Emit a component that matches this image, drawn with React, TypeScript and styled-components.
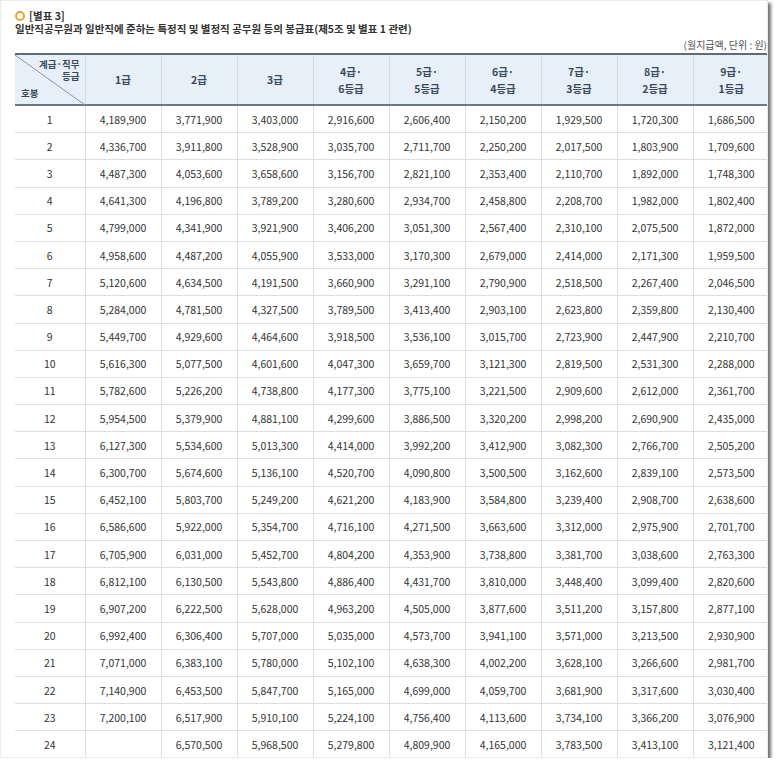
import React from 'react';
import styled, { createGlobalStyle } from 'styled-components';

const Global = createGlobalStyle`
  body { margin: 0; background: #fff; font-family: "Noto Sans CJK KR", "Noto Sans", sans-serif; }
`;

const Frame = styled.div`
  width: 768px;
  height: 758px;
  box-sizing: border-box;
  background: #fff;
  border: 1px solid #ececec;
  box-shadow: 3px 3px 3px rgba(0, 0, 0, 0.55);
  padding: 8px 0 0 14px;
  overflow: hidden;
`;

const Title = styled.div`
  font-size: 10.5px;
  font-weight: bold;
  color: #333;
  line-height: 13px;
  p { margin: 0; }
`;

const TitleRow = styled.div`
  display: flex;
  align-items: center;
  gap: 4px;
`;

const Dot = styled.span`
  width: 6px;
  height: 6px;
  border: 2px solid #f0a030;
  border-radius: 50%;
  display: inline-block;
`;

const Unit = styled.div`
  text-align: right;
  font-size: 10px;
  color: #555;
  margin: 2px 0 1px;
`;

const Table = styled.table`
  border-collapse: collapse;
  table-layout: fixed;
  width: 754px;
  font-size: 10.5px;
  color: #333;
  border-top: 2px solid #5d6b7a;
  th, td { text-align: center; padding: 0; }
  th {
    background: #e7eff9;
    height: 49px;
    line-height: 17px;
    font-weight: bold;
    color: #3b4a5a;
    border-right: 1px solid #d5dbe2;
    border-bottom: 2px solid #6c7a88;
  }
  td {
    height: 26.2px;
    border-right: 1px solid #dedede;
    border-bottom: 1px solid #dedede;
  }
  th:last-child, td:last-child { border-right: none; }
`;

const FirstCol = styled.col`
  width: 70px;
`;

const Corner = styled.th`
  position: relative;
`;

const Diagonal = styled.svg`
  position: absolute;
  left: 0;
  top: 0;
`;

const CornerLabel = styled.span<{ $top?: boolean }>`
  position: absolute;
  font-size: 9.5px;
  line-height: 12px;
  ${p => (p.$top ? 'right: 5px; top: 3px; text-align: right;' : 'left: 6px; bottom: 5px;')}
`;

const heads = ['1급', '2급', '3급', '4급·\n6등급', '5급·\n5등급', '6급·\n4등급', '7급·\n3등급', '8급·\n2등급', '9급·\n1등급'];

const raw = `4,189,900 3,771,900 3,403,000 2,916,600 2,606,400 2,150,200 1,929,500 1,720,300 1,686,500
4,336,700 3,911,800 3,528,900 3,035,700 2,711,700 2,250,200 2,017,500 1,803,900 1,709,600
4,487,300 4,053,600 3,658,600 3,156,700 2,821,100 2,353,400 2,110,700 1,892,000 1,748,300
4,641,300 4,196,800 3,789,200 3,280,600 2,934,700 2,458,800 2,208,700 1,982,000 1,802,400
4,799,000 4,341,900 3,921,900 3,406,200 3,051,300 2,567,400 2,310,100 2,075,500 1,872,000
4,958,600 4,487,200 4,055,900 3,533,000 3,170,300 2,679,000 2,414,000 2,171,300 1,959,500
5,120,600 4,634,500 4,191,500 3,660,900 3,291,100 2,790,900 2,518,500 2,267,400 2,046,500
5,284,000 4,781,500 4,327,500 3,789,500 3,413,400 2,903,100 2,623,800 2,359,800 2,130,400
5,449,700 4,929,600 4,464,600 3,918,500 3,536,100 3,015,700 2,723,900 2,447,900 2,210,700
5,616,300 5,077,500 4,601,600 4,047,300 3,659,700 3,121,300 2,819,500 2,531,300 2,288,000
5,782,600 5,226,200 4,738,800 4,177,300 3,775,100 3,221,500 2,909,600 2,612,000 2,361,700
5,954,500 5,379,900 4,881,100 4,299,600 3,886,500 3,320,200 2,998,200 2,690,900 2,435,000
6,127,300 5,534,600 5,013,300 4,414,000 3,992,200 3,412,900 3,082,300 2,766,700 2,505,200
6,300,700 5,674,600 5,136,100 4,520,700 4,090,800 3,500,500 3,162,600 2,839,100 2,573,500
6,452,100 5,803,700 5,249,200 4,621,200 4,183,900 3,584,800 3,239,400 2,908,700 2,638,600
6,586,600 5,922,000 5,354,700 4,716,100 4,271,500 3,663,600 3,312,000 2,975,900 2,701,700
6,705,900 6,031,000 5,452,700 4,804,200 4,353,900 3,738,800 3,381,700 3,038,600 2,763,300
6,812,100 6,130,500 5,543,800 4,886,400 4,431,700 3,810,000 3,448,400 3,099,400 2,820,600
6,907,200 6,222,500 5,628,000 4,963,200 4,505,000 3,877,600 3,511,200 3,157,800 2,877,100
6,992,400 6,306,400 5,707,000 5,035,000 4,573,700 3,941,100 3,571,000 3,213,500 2,930,900
7,071,000 6,383,100 5,780,000 5,102,100 4,638,300 4,002,200 3,628,100 3,266,600 2,981,700
7,140,900 6,453,500 5,847,700 5,165,000 4,699,000 4,059,700 3,681,900 3,317,600 3,030,400
7,200,100 6,517,900 5,910,100 5,224,100 4,756,400 4,113,600 3,734,100 3,366,200 3,076,900
- 6,570,500 5,968,500 5,279,800 4,809,900 4,165,000 3,783,500 3,413,100 3,121,400`;

const rows = raw.split('\n').map(l => l.split(' ').map(v => (v === '-' ? '' : v)));

export default function App() {
  return (
    <>
      <Global />
      <Frame>
        <Title>
          <TitleRow><Dot />[별표 3]</TitleRow>
          <p>일반직공무원과 일반직에 준하는 특정직 및 별정직 공무원 등의 봉급표(제5조 및 별표 1 관련)</p>
        </Title>
        <Unit>(월지급액, 단위 : 원)</Unit>
        <Table>
          <colgroup>
            <FirstCol />
            {heads.map((_, i) => <col key={i} />)}
          </colgroup>
          <thead>
            <tr>
              <Corner>
                <Diagonal width="70" height="50">
                  <line x1="0" y1="0" x2="70" y2="50" stroke="#8a96a3" strokeWidth="1" />
                </Diagonal>
                <CornerLabel $top>계급·직무<br />등급</CornerLabel>
                <CornerLabel>호봉</CornerLabel>
              </Corner>
              {heads.map(h => (
                <th key={h}>{h.split('\n').map((t, i) => <div key={i}>{t}</div>)}</th>
              ))}
            </tr>
          </thead>
          <tbody>
            {rows.map((r, i) => (
              <tr key={i}>
                <td>{i + 1}</td>
                {r.map((v, j) => <td key={j}>{v}</td>)}
              </tr>
            ))}
          </tbody>
        </Table>
      </Frame>
    </>
  );
}
